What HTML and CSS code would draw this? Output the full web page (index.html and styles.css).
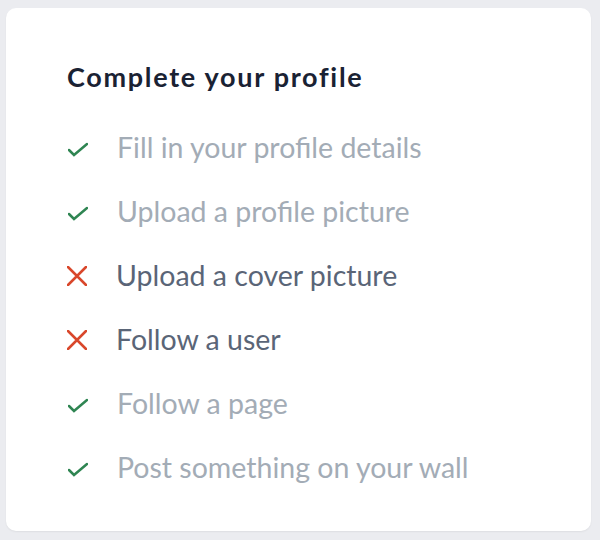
FILE: index.html
```html
<!DOCTYPE html>
<html>
<head>
<meta charset="utf-8">
<link rel="stylesheet" href="styles.css">
</head>
<body>
<div class="card">
  <h2 class="title">Complete your profile</h2>
  <ul class="list">
    <li class="item done"><svg class="icon" viewBox="0 0 20 20"><path d="M1 10 L6 15 L19 4"/></svg><span>Fill in your profile details</span></li>
    <li class="item done"><svg class="icon" viewBox="0 0 20 20"><path d="M1 10 L6 15 L19 4"/></svg><span>Upload a profile picture</span></li>
    <li class="item todo"><svg class="icon" viewBox="0 0 20 20"><path d="M1 1 L19 19 M19 1 L1 19"/></svg><span>Upload a cover picture</span></li>
    <li class="item todo"><svg class="icon" viewBox="0 0 20 20"><path d="M1 1 L19 19 M19 1 L1 19"/></svg><span>Follow a user</span></li>
    <li class="item done"><svg class="icon" viewBox="0 0 20 20"><path d="M1 10 L6 15 L19 4"/></svg><span>Follow a page</span></li>
    <li class="item done"><svg class="icon" viewBox="0 0 20 20"><path d="M1 10 L6 15 L19 4"/></svg><span>Post something on your wall</span></li>
  </ul>
</div>
</body>
</html>
```

FILE: styles.css
```css
html, body {
  margin: 0;
  padding: 0;
}
body {
  background: #ebecf0;
  font-family: Lato, "Noto Sans", sans-serif;
  padding: 8px 9px 9px 6px;
  width: 600px;
  height: 540px;
  box-sizing: border-box;
}
.card {
  background: #ffffff;
  border-radius: 10px;
  box-shadow: 0 1px 2px rgba(0,0,0,0.06);
  height: 523px;
  box-sizing: border-box;
  padding: 53px 40px 0 61px;
}
.title {
  margin: 0 0 22px 0;
  font-size: 27px;
  font-weight: 700;
  color: #1a2233;
  line-height: 32px;
  letter-spacing: 1.7px;
}
.list {
  list-style: none;
  margin: 0;
  padding: 0;
}
.item {
  display: flex;
  align-items: center;
  height: 64px;
  font-size: 28.5px;
}
.icon {
  width: 20px;
  height: 20px;
  margin-right: 29px;
  fill: none;
  stroke-width: 2.5;
  stroke-linecap: round;
  flex: none;
}
.done { color: #a3acb6; }
.done .icon { stroke: #2f8552; margin-left: 1px; margin-top: 6px; }
.todo { color: #5a6577; }
.todo .icon { stroke: #d9472b; margin-top: 1px; }
```
